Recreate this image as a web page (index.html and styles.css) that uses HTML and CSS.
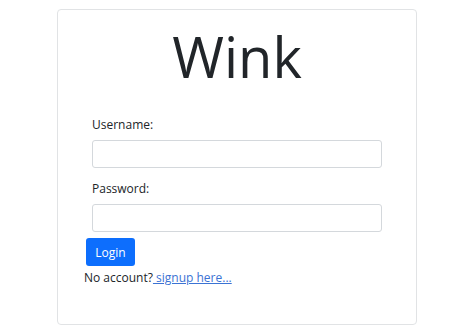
FILE: index.html
```html
<!DOCTYPE html>
<html lang="en">
<head>
<meta charset="utf-8">
<title>Wink</title>
<link rel="stylesheet" href="styles.css">
</head>
<body>
<div class="card">
  <h1 class="title">Wink</h1>
  <form class="form">
    <div class="group">
      <label class="label" for="username">Username:</label>
      <input class="input" id="username" type="text">
    </div>
    <div class="group">
      <label class="label" for="password">Password:</label>
      <input class="input" id="password" type="password">
    </div>
    <button class="btn" type="button">Login</button>
    <p class="note">No account?<a href="#" class="link"> signup here...</a></p>
  </form>
</div>
</body>
</html>
```
FILE: styles.css
```css
html, body {
  margin: 0;
  padding: 0;
  background: #ffffff;
}
body {
  font-family: "Open Sans", "Noto Sans", sans-serif;
  font-size: 12px;
  line-height: 18px;
  color: #212529;
  padding-top: 9px;
}
.card {
  box-sizing: border-box;
  width: 360px;
  height: 316px;
  margin: 0 auto;
  border: 1px solid #e1e3e5;
  border-radius: 4px;
  padding: 0 34px 0 26px;
  display: flex;
  flex-direction: column;
}
.title {
  margin: 13px 0 0;
  font-size: 56px;
  line-height: 67px;
  font-weight: 400;
  text-align: center;
  color: #212529;
  padding-left: 8px;
}
.form {
  margin-top: 26px;
  display: flex;
  flex-direction: column;
  align-items: flex-start;
}
.group {
  align-self: stretch;
  margin-left: 8px;
  margin-bottom: 12px;
  display: flex;
  flex-direction: column;
}
.group + .group {
  margin-bottom: 6px;
}
.label {
  margin-bottom: 6px;
}
.input {
  box-sizing: border-box;
  height: 28px;
  width: 100%;
  border: 1px solid #d4d8dc;
  border-radius: 3px;
  background: #fff;
  margin: 0;
}
.btn {
  box-sizing: border-box;
  margin-left: 2px;
  width: 49px;
  height: 28px;
  border: none;
  border-radius: 3px;
  background: #0d6efd;
  color: #fff;
  font-family: inherit;
  font-size: 12px;
  padding: 0;
}
.note {
  margin: 3px 0 0;
}
.link {
  color: #3b73d4;
  text-decoration: underline;
}
```
